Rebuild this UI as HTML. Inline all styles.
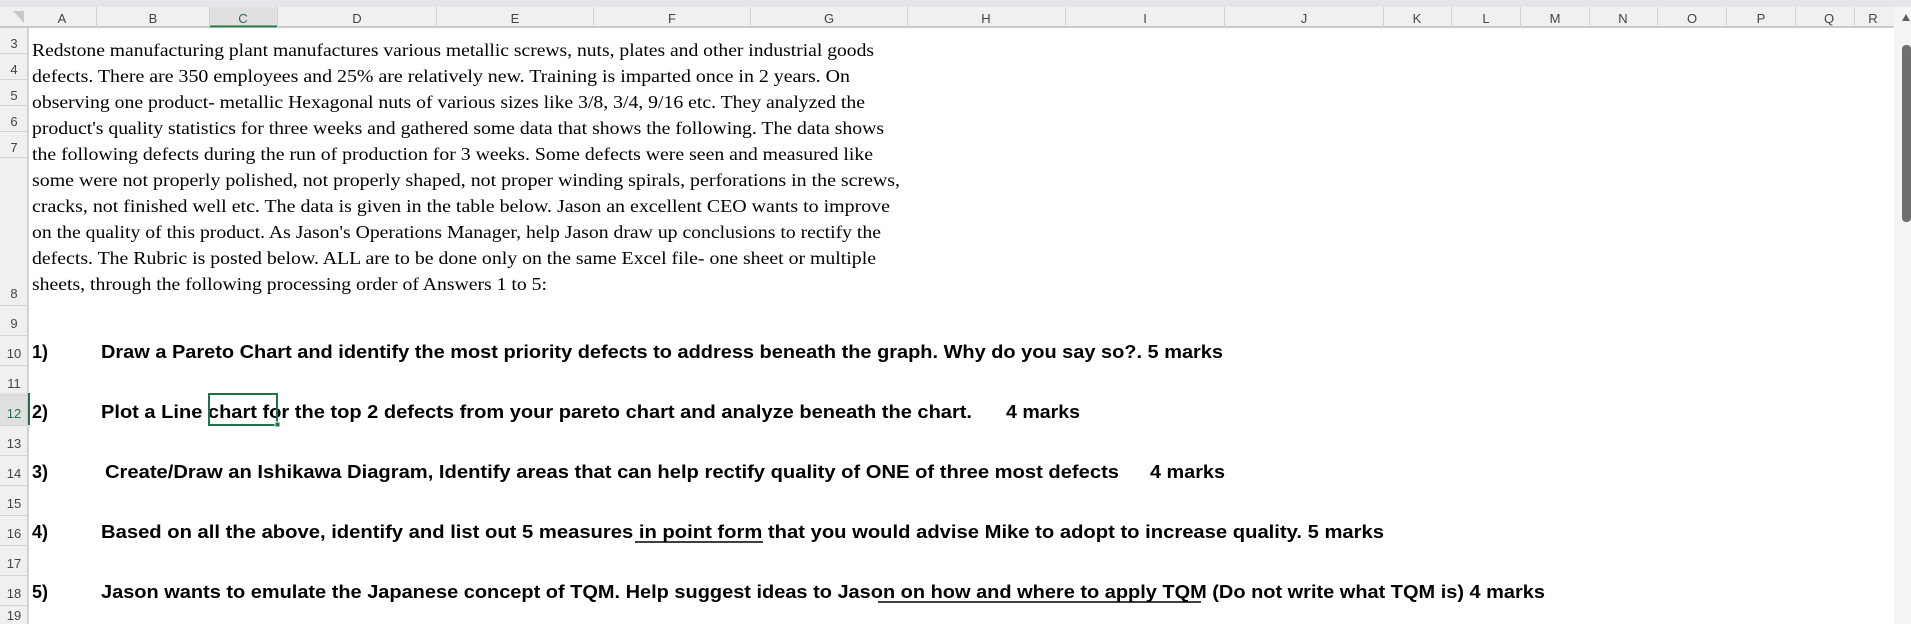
<!DOCTYPE html>
<html><head><meta charset="utf-8"><style>
html,body{margin:0;padding:0;background:#fff;width:1911px;height:624px;overflow:hidden}
svg{display:block}
.h{font-family:"Liberation Sans",sans-serif;font-size:13px;fill:#444}
.s{font-family:"Liberation Serif",serif;font-size:18px;fill:#000}
.b{font-family:"Liberation Sans",sans-serif;font-size:18px;font-weight:bold;fill:#000}
</style></head><body>
<svg width="1911" height="624" xmlns="http://www.w3.org/2000/svg">
<rect x="0" y="0" width="1911" height="7" fill="#e6e6ea"/>
<rect x="0" y="7" width="1894" height="20" fill="#f0f0f0"/>
<rect x="0" y="27" width="28" height="597" fill="#f0f0f0"/>
<rect x="209" y="7" width="68" height="20" fill="#e0e0e0"/>
<rect x="0" y="393" width="28" height="32" fill="#e0e0e0"/>
<line x1="0" y1="27" x2="1894" y2="27" stroke="#9e9e9e" stroke-width="1"/>
<line x1="28" y1="27" x2="28" y2="624" stroke="#b0b0b0" stroke-width="1"/>
<line x1="209" y1="26.5" x2="277" y2="26.5" stroke="#217346" stroke-width="2"/>
<line x1="29" y1="393" x2="29" y2="425" stroke="#217346" stroke-width="2"/>
<polygon points="13,11 24,11 24,23" fill="#c8c8c8"/>
<g stroke="#d4d4d4" stroke-width="1">
<line x1="96.5" y1="7" x2="96.5" y2="27"/><line x1="209.5" y1="7" x2="209.5" y2="27"/><line x1="277.5" y1="7" x2="277.5" y2="27"/>
<line x1="436.5" y1="7" x2="436.5" y2="27"/><line x1="593.5" y1="7" x2="593.5" y2="27"/><line x1="750.5" y1="7" x2="750.5" y2="27"/>
<line x1="907.5" y1="7" x2="907.5" y2="27"/><line x1="1065.5" y1="7" x2="1065.5" y2="27"/><line x1="1224.5" y1="7" x2="1224.5" y2="27"/>
<line x1="1383.5" y1="7" x2="1383.5" y2="27"/><line x1="1451.5" y1="7" x2="1451.5" y2="27"/><line x1="1520.5" y1="7" x2="1520.5" y2="27"/>
<line x1="1589.5" y1="7" x2="1589.5" y2="27"/><line x1="1657.5" y1="7" x2="1657.5" y2="27"/><line x1="1726.5" y1="7" x2="1726.5" y2="27"/>
<line x1="1795.5" y1="7" x2="1795.5" y2="27"/><line x1="1854.5" y1="7" x2="1854.5" y2="27"/>
<line x1="0" y1="53.5" x2="28" y2="53.5"/><line x1="0" y1="79.5" x2="28" y2="79.5"/><line x1="0" y1="105.5" x2="28" y2="105.5"/>
<line x1="0" y1="131.5" x2="28" y2="131.5"/><line x1="0" y1="157.5" x2="28" y2="157.5"/><line x1="0" y1="305.5" x2="28" y2="305.5"/>
<line x1="0" y1="335.5" x2="28" y2="335.5"/><line x1="0" y1="365.5" x2="28" y2="365.5"/><line x1="0" y1="395.5" x2="28" y2="395.5"/>
<line x1="0" y1="425.5" x2="28" y2="425.5"/><line x1="0" y1="455.5" x2="28" y2="455.5"/><line x1="0" y1="485.5" x2="28" y2="485.5"/>
<line x1="0" y1="515.5" x2="28" y2="515.5"/><line x1="0" y1="545.5" x2="28" y2="545.5"/><line x1="0" y1="575.5" x2="28" y2="575.5"/>
<line x1="0" y1="605.5" x2="28" y2="605.5"/>
</g>
<g class="h" text-anchor="middle">
<text x="62" y="23">A</text><text x="153" y="23">B</text><text x="243" y="23" fill="#217346">C</text><text x="357" y="23">D</text>
<text x="515" y="23">E</text><text x="672" y="23">F</text><text x="829" y="23">G</text><text x="986" y="23">H</text>
<text x="1145" y="23">I</text><text x="1304" y="23">J</text><text x="1417" y="23">K</text><text x="1486" y="23">L</text>
<text x="1555" y="23">M</text><text x="1623" y="23">N</text><text x="1692" y="23">O</text><text x="1761" y="23">P</text>
<text x="1829" y="23">Q</text><text x="1873" y="23">R</text>
</g>
<g class="h" text-anchor="middle">
<text x="14" y="48">3</text><text x="14" y="74">4</text><text x="14" y="100">5</text><text x="14" y="126">6</text><text x="14" y="152">7</text>
<text x="14" y="298">8</text><text x="14" y="328">9</text><text x="14" y="358">10</text><text x="14" y="388">11</text>
<text x="14" y="418" fill="#217346">12</text><text x="14" y="448">13</text><text x="14" y="478">14</text><text x="14" y="508">15</text>
<text x="14" y="538">16</text><text x="14" y="568">17</text><text x="14" y="598">18</text><text x="14" y="620">19</text>
</g>
<g class="s" lengthAdjust="spacingAndGlyphs">
<text x="32" y="56" textLength="842" lengthAdjust="spacingAndGlyphs">Redstone manufacturing plant manufactures various metallic screws, nuts, plates and other industrial goods</text>
<text x="32" y="82" textLength="818" lengthAdjust="spacingAndGlyphs">defects. There are 350 employees and 25% are relatively new. Training is imparted once in 2 years. On</text>
<text x="32" y="108" textLength="833" lengthAdjust="spacingAndGlyphs">observing one product- metallic Hexagonal nuts of various sizes like 3/8, 3/4, 9/16 etc. They analyzed the</text>
<text x="32" y="134" textLength="852" lengthAdjust="spacingAndGlyphs">product's quality statistics for three weeks and gathered some data that shows the following. The data shows</text>
<text x="32" y="160" textLength="841" lengthAdjust="spacingAndGlyphs">the following defects during the run of production for 3 weeks. Some defects were seen and measured  like</text>
<text x="32" y="186" textLength="868" lengthAdjust="spacingAndGlyphs">some were not properly polished, not properly shaped, not proper winding spirals, perforations in the screws,</text>
<text x="32" y="212" textLength="858" lengthAdjust="spacingAndGlyphs">cracks, not finished well etc. The data is given in the table below.  Jason an excellent CEO wants to improve</text>
<text x="32" y="238" textLength="849" lengthAdjust="spacingAndGlyphs">on the quality of this product. As Jason's Operations Manager, help Jason draw up conclusions to rectify the</text>
<text x="32" y="264" textLength="844" lengthAdjust="spacingAndGlyphs">defects. The Rubric is posted below. ALL are to be done only on the same Excel file- one sheet or multiple</text>
<text x="32" y="290" textLength="515" lengthAdjust="spacingAndGlyphs">sheets, through the following processing order of Answers 1 to 5:</text>
</g>
<g class="b">
<text x="32" y="358">1)</text>
<text x="101" y="358" textLength="1122" lengthAdjust="spacingAndGlyphs">Draw a Pareto Chart and identify the most priority defects to address beneath the graph. Why do you say so?.  5 marks</text>
<text x="32" y="418">2)</text>
<text x="101" y="418" textLength="871" lengthAdjust="spacingAndGlyphs">Plot a Line chart for the top 2 defects from your pareto chart and analyze beneath the chart.</text>
<text x="1006" y="418" textLength="74" lengthAdjust="spacingAndGlyphs">4 marks</text>
<text x="32" y="478">3)</text>
<text x="105" y="478" textLength="1014" lengthAdjust="spacingAndGlyphs">Create/Draw an Ishikawa Diagram, Identify areas that can help rectify quality of ONE of three most defects</text>
<text x="1150" y="478" textLength="75" lengthAdjust="spacingAndGlyphs">4 marks</text>
<text x="32" y="538">4)</text>
<text x="101" y="538" textLength="1283" lengthAdjust="spacingAndGlyphs">Based on all the above, identify and list out 5  measures in point form that you would advise Mike to adopt to increase quality.  5 marks</text>
<text x="32" y="598">5)</text>
<text x="101" y="598" textLength="1444" lengthAdjust="spacingAndGlyphs">Jason wants to emulate the Japanese concept of TQM. Help suggest ideas to Jason on how and where to apply TQM (Do not write what TQM is)  4 marks</text>
</g>
<line x1="635" y1="542" x2="763" y2="542" stroke="#000" stroke-width="1.5"/>
<line x1="878" y1="602" x2="1201" y2="602" stroke="#000" stroke-width="1.5"/>
<rect x="209" y="394" width="68" height="31" fill="none" stroke="#217346" stroke-width="2"/>
<rect x="275" y="422" width="5" height="5" fill="#217346" stroke="#fff" stroke-width="1"/>
<rect x="1894" y="7" width="17" height="617" fill="#f5f5f5"/>
<polygon points="1902,21 1906,14 1910,21" fill="#606060"/>
<rect x="1902" y="45" width="9" height="177" rx="4" fill="#707070"/>
</svg>
</body></html>
